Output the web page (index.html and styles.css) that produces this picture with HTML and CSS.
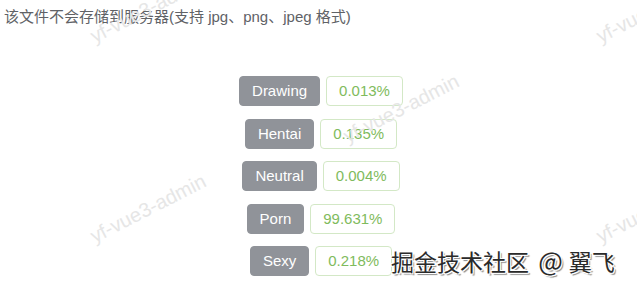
FILE: index.html
```html
<!DOCTYPE html>
<html>
<head>
  <title>Image Check</title>
  <link rel="stylesheet" href="styles.css">
</head>
<body>

  <p class="tip">该文件不会存储到服务器(支持 jpg、png、jpeg 格式)</p>

  <div class="result-list">
    <div class="result-row">
      <span class="label-tag">Drawing</span>
      <span class="score-tag">0.013%</span>
    </div>
    <div class="result-row">
      <span class="label-tag">Hentai</span>
      <span class="score-tag">0.135%</span>
    </div>
    <div class="result-row">
      <span class="label-tag">Neutral</span>
      <span class="score-tag">0.004%</span>
    </div>
    <div class="result-row">
      <span class="label-tag">Porn</span>
      <span class="score-tag">99.631%</span>
    </div>
    <div class="result-row">
      <span class="label-tag">Sexy</span>
      <span class="score-tag">0.218%</span>
    </div>
  </div>

  <!-- watermarks laid over the page -->
  <span class="wm wm-1">yf-vue3-admin</span>
  <span class="wm wm-2">yf-vue3-admin</span>
  <span class="wm wm-3">yf-vue3-admin</span>
  <span class="wm wm-4">yf-vue3-admin</span>
  <span class="wm wm-5">yf-vue3-admin</span>
  <span class="site-mark">掘金技术社区 <span class="at">@</span>翼飞</span>

</body>
</html>
```

FILE: styles.css
```css
body {
  margin: 0;
  background: #fff;
  color: #606266;
  font-family: 'Liberation Sans', 'Noto Sans CJK SC', sans-serif;
  position: relative;
  height: 289px;
  overflow: hidden;
}

.tip {
  margin: 0;
  padding: 7px 0 0 4px;
  font-size: 15px;
  line-height: 20px;
}

.result-list {
  margin-top: 49px;
  padding-left: 5px;
  display: flex;
  flex-direction: column;
  align-items: center;
  gap: 12.5px;
}

.result-row {
  display: flex;
  gap: 6px;
}

.label-tag,
.score-tag {
  box-sizing: border-box;
  height: 30px;
  line-height: 28px;
  padding: 0 12px;
  border: 1px solid;
  border-radius: 4px;
  font-size: 15px;
  white-space: nowrap;
}

.label-tag {
  background: #909399;
  border-color: #909399;
  color: #fff;
}

.score-tag {
  background: #fff;
  border-color: #d3e8c6;
  color: #7fbb5d;
}

.wm {
  position: absolute;
  font-size: 20px;
  line-height: 20px;
  color: #e6e6e6;
  transform: rotate(-27deg);
  transform-origin: 0 100%;
  white-space: nowrap;
  pointer-events: none;
}

.wm-1 { left: 96px; top: 26px; }
.wm-2 { left: 349px; top: 126px; }
.wm-3 { left: 96px; top: 226px; }
.wm-4 { left: 602px; top: 26px; }
.wm-5 { left: 602px; top: 226px; }

.site-mark {
  position: absolute;
  left: 391px;
  top: 246px;
  font-size: 23px;
  line-height: 28px;
  color: #2a2a2a;
  font-family: 'Noto Sans CJK SC', sans-serif;
  text-shadow: 1px 1px 0 #fff, -1px -1px 0 #fff, 1px -1px 0 #fff, -1px 1px 0 #fff, 2px 2px 1px #888;
  white-space: nowrap;
}

.site-mark .at {
  display: inline-block;
  margin: 0 6px 0 4px;
  font-size: 26px;
}
```
